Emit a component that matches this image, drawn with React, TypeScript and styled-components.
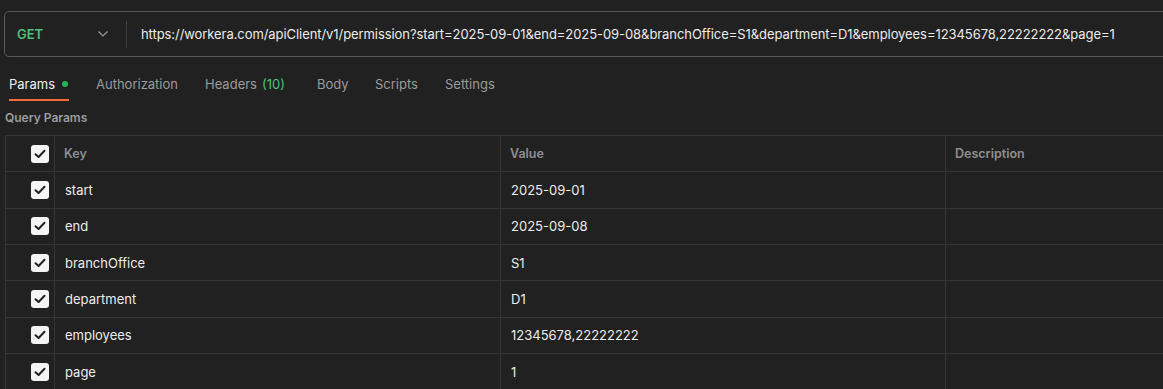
import { createGlobalStyle, styled } from 'styled-components';

const GlobalStyle = createGlobalStyle`
  html, body {
    margin: 0;
    padding: 0;
    background: #212121;
    overflow: hidden;
  }
  body {
    font-family: Inter, "Noto Sans", sans-serif;
    -webkit-font-smoothing: antialiased;
  }
`;

const url =
  'https://workera.com/apiClient/v1/permission?start=2025-09-01&end=2025-09-08&branchOffice=S1&department=D1&employees=12345678,22222222&page=1';

const params = [
  { key: 'start', value: '2025-09-01' },
  { key: 'end', value: '2025-09-08' },
  { key: 'branchOffice', value: 'S1' },
  { key: 'department', value: 'D1' },
  { key: 'employees', value: '12345678,22222222' },
  { key: 'page', value: '1' },
];

const tabs = [
  { label: 'Params', dot: true, width: 60 },
  { label: 'Authorization', width: 82 },
  { label: 'Headers', count: '(10)', width: 85 },
  { label: 'Body', width: 31 },
  { label: 'Scripts', width: 43 },
  { label: 'Settings', width: 52 },
];

const Check = () => (
  <CheckBox>
    <svg width="12" height="10" viewBox="0 0 12 10">
      <path d="M1.5 5.2 L4.6 8 L10.5 1.8" fill="none" stroke="#212121" strokeWidth="2" strokeLinecap="round" strokeLinejoin="round" />
    </svg>
  </CheckBox>
);

const App = () => (
  <Page>
    <GlobalStyle />
    <UrlBar>
      <Method>
        <span>GET</span>
        <svg width="12" height="8" viewBox="0 0 12 8">
          <path d="M1.5 1.5 L6 6 L10.5 1.5" fill="none" stroke="#9a9a9a" strokeWidth="1.2" />
        </svg>
      </Method>
      <Divider />
      <UrlText>{url}</UrlText>
    </UrlBar>

    <Tabs>
      {tabs.map((t) => (
        <Tab key={t.label} $active={!!t.dot} $width={t.width}>
          {t.label}
          {t.dot && <Dot />}
          {t.count && <Count>{t.count}</Count>}
        </Tab>
      ))}
    </Tabs>

    <SectionTitle>Query Params</SectionTitle>

    <Table>
      <CheckCell>
        <Check />
      </CheckCell>
      <HeadCell>Key</HeadCell>
      <HeadCell>Value</HeadCell>
      <HeadCell>Description</HeadCell>
      {params.map((p) => (
        <Row key={p.key}>
          <CheckCell>
            <Check />
          </CheckCell>
          <Cell>{p.key}</Cell>
          <Cell>{p.value}</Cell>
          <Cell />
        </Row>
      ))}
    </Table>
  </Page>
);

export default App;

const Page = styled.div`
  width: 1163px;
  height: 389px;
  overflow: hidden;
  padding-top: 11px;
  box-sizing: border-box;
`;

const UrlBar = styled.div`
  margin-left: 4px;
  width: 1180px;
  height: 46px;
  box-sizing: border-box;
  border: 1px solid #595959;
  border-radius: 5px;
  display: flex;
  align-items: center;
`;

const Method = styled.div`
  width: 121px;
  box-sizing: border-box;
  padding-left: 12px;
  padding-right: 17px;
  display: flex;
  align-items: center;
  justify-content: space-between;
  color: #4ec07c;
  font-weight: 600;
  font-size: 13px;
`;

const Divider = styled.div`
  width: 1px;
  height: 27px;
  background: #404040;
`;

const UrlText = styled.div`
  margin-left: 14px;
  color: #ececec;
  font-size: 13px;
  white-space: nowrap;
  letter-spacing: -0.07px;
`;

const Tabs = styled.div`
  display: flex;
  padding-left: 9px;
  margin-top: 12px;
  height: 32px;
`;

const Tab = styled.div<{ $active?: boolean; $width: number }>`
  width: ${(p) => p.$width}px;
  margin-right: 27px;
  height: 30px;
  display: flex;
  align-items: center;
  font-size: 13px;
  white-space: nowrap;
  color: ${(p) => (p.$active ? '#efefef' : '#9b9b9b')};
  border-bottom: 2px solid ${(p) => (p.$active ? '#f26b3a' : 'transparent')};
`;

const Dot = styled.span`
  width: 6px;
  height: 6px;
  border-radius: 50%;
  background: #23b559;
  margin-left: 7px;
`;

const Count = styled.span`
  color: #4ec07c;
  margin-left: 5px;
`;

const SectionTitle = styled.div`
  margin-top: 7px;
  padding-left: 5px;
  height: 20px;
  font-size: 12px;
  font-weight: 600;
  color: #9d9d9d;
  line-height: 20px;
`;

const Table = styled.div`
  margin-top: 7px;
  margin-left: 5px;
  width: 1190px;
  display: grid;
  grid-template-columns: 49px 446px 445px 1fr;
  grid-auto-rows: 36.33px;
  border-top: 1px solid #363636;
  border-left: 1px solid #363636;
`;

const Row = styled.div`
  display: contents;
`;

const CellBase = styled.div`
  border-right: 1px solid #363636;
  border-bottom: 1px solid #363636;
  display: flex;
  align-items: center;
  box-sizing: border-box;
  white-space: nowrap;
`;

const CheckCell = styled(CellBase)`
  justify-content: flex-end;
  padding-right: 5px;
`;

const HeadCell = styled(CellBase)`
  padding-left: 9px;
  font-size: 12.5px;
  font-weight: 600;
  color: #8f8f8f;
`;

const Cell = styled(CellBase)`
  padding-left: 10px;
  font-size: 13px;
  color: #ececec;
`;

const CheckBox = styled.div`
  width: 18px;
  height: 18px;
  border-radius: 3px;
  background: #f4f4f4;
  display: flex;
  align-items: center;
  justify-content: center;
`;
